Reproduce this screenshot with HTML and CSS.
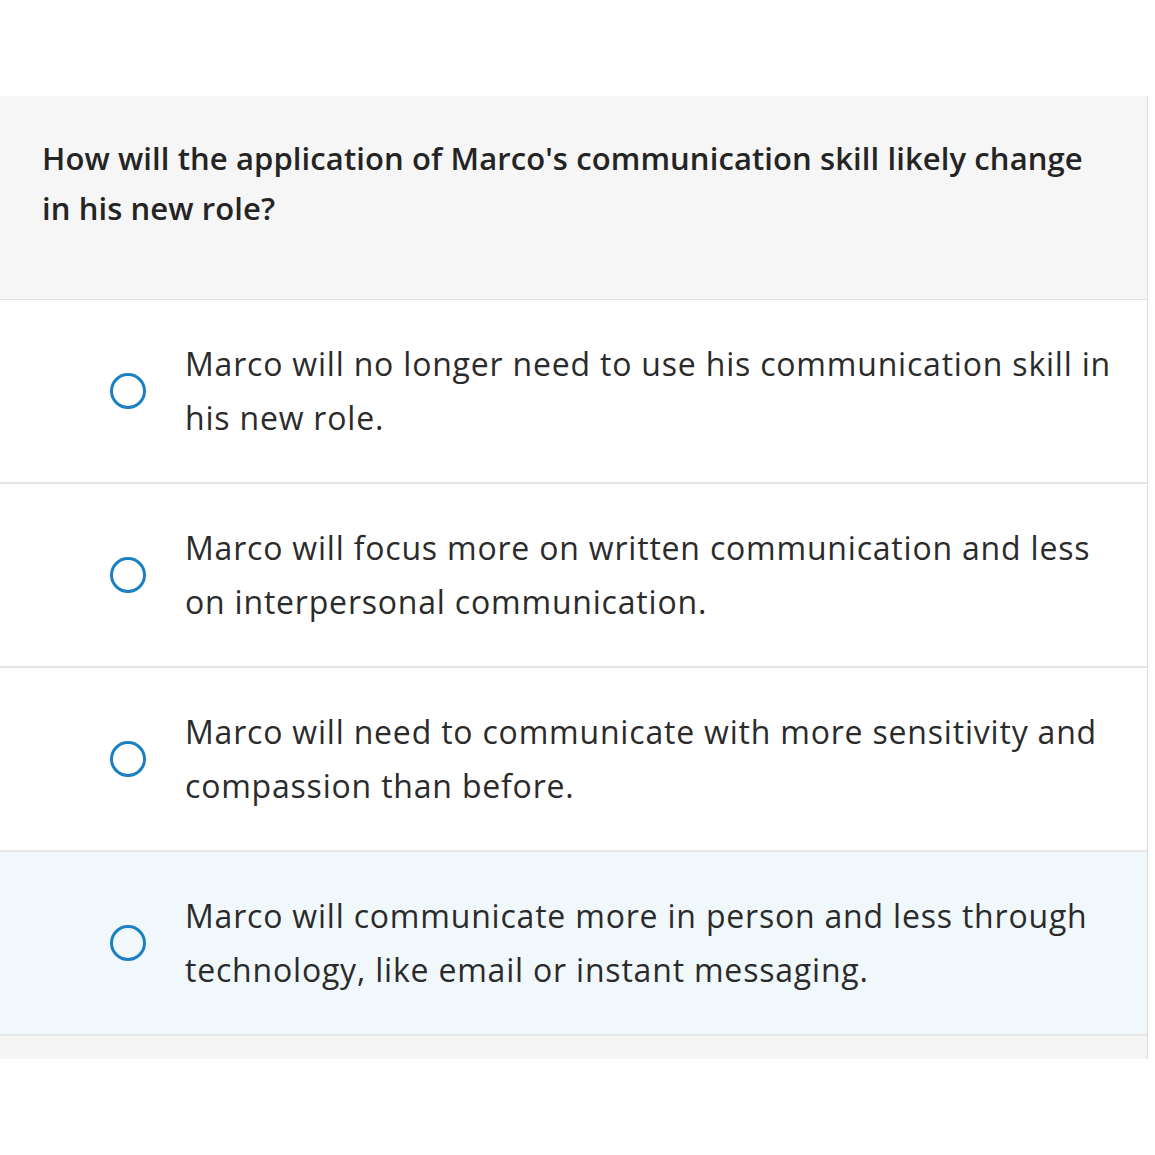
FILE: index.html
```html
<!DOCTYPE html>
<html>
<head>
<meta charset="utf-8">
<link rel="stylesheet" href="styles.css">
</head>
<body>
<div class="page">
  <div class="quiz">
    <div class="question">How will the application of Marco's communication skill likely change in his new role?</div>
    <div class="option">
      <span class="radio"></span>
      <div class="label">Marco will no longer need to use his communication skill in his new role.</div>
    </div>
    <div class="option">
      <span class="radio"></span>
      <div class="label">Marco will focus more on written communication and less on interpersonal communication.</div>
    </div>
    <div class="option">
      <span class="radio"></span>
      <div class="label">Marco will need to communicate with more sensitivity and compassion than before.</div>
    </div>
    <div class="option hover">
      <span class="radio"></span>
      <div class="label">Marco will communicate more in person and less through technology, like email or instant messaging.</div>
    </div>
    <div class="footer"></div>
  </div>
</div>
</body>
</html>
```
FILE: styles.css
```css
html, body {
  margin: 0;
  padding: 0;
  background: #ffffff;
}
.page {
  padding-top: 96px;
  width: 1148px;
}
.quiz {
  border-right: 1px solid #dcdcdc;
  font-family: "Open Sans", "Lato", sans-serif;
  color: #2b2b2b;
}
.question {
  background: #f6f6f6;
  padding: 37px 50px 66px 42px;
  font-size: 31px;
  font-weight: 600;
  letter-spacing: 0.1px;
  line-height: 50px;
  color: #242424;
  border-bottom: 1.5px solid #e2e2e2;
}
.option {
  display: flex;
  align-items: center;
  padding: 37px 30px 37px 110px;
  border-bottom: 2px solid #e6e6e6;
}
.option.hover {
  background: #f1f8fc;
}
.radio {
  flex: none;
  width: 30px;
  height: 30px;
  border: 3px solid #1a80c4;
  border-radius: 50%;
  margin-right: 39px;
}
.label {
  font-size: 32px;
  letter-spacing: 0.8px;
  line-height: 54px;
  font-weight: 400;
}
.footer {
  height: 23px;
  background: #f5f5f5;
}
```
